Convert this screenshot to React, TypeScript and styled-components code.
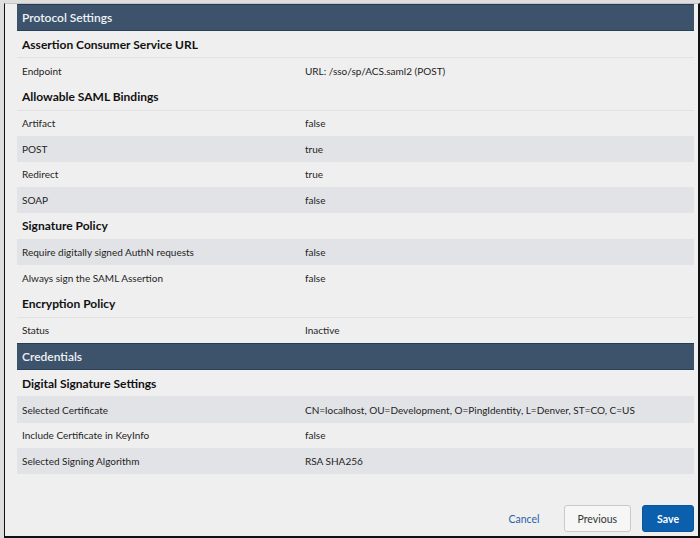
import React from "react";
import styled, { createGlobalStyle } from "styled-components";

const Global = createGlobalStyle`
  html, body { margin: 0; padding: 0; background: #dedede; }
  body { font-family: Lato, "Open Sans", "Liberation Sans", sans-serif; }
  * { box-sizing: border-box; }
`;

const Frame = styled.div`
  width: 696px;
  height: 535px;
  margin: 3px 0 0 4px;
  background: #efefef;
  border-top: 1px solid #c4c4c4;
  border-left: 1px solid #111;
  border-right: 2px solid #111;
  border-bottom: 2px solid #111;
  padding: 0 4px 0 12px;
  display: flex;
  flex-direction: column;
`;

const SectionHeader = styled.div`
  height: 27px;
  display: flex;
  align-items: center;
  padding-left: 5px;
  background: #3c536b;
  border-top: 1px solid #243c55;
  border-bottom: 1px solid #2a4259;
  color: #eef2f6;
  font-size: 12px;
  font-weight: 600;
`;

const SubHeading = styled.div`
  height: 27px;
  display: flex;
  align-items: center;
  padding-left: 5px;
  border-bottom: 1px solid #e2e2e2;
  color: #111;
  font-size: 12px;
  font-weight: 700;
`;

const Row = styled.div<{ $shaded?: boolean }>`
  height: 25.5px;
  display: grid;
  grid-template-columns: 283px 1fr;
  align-items: center;
  background: ${(p) => (p.$shaded ? "#e2e3e6" : "transparent")};
  color: #1e1e1e;
  font-size: 10px;
`;

const Cell = styled.div`
  padding-left: 5px;
  white-space: nowrap;
`;

const Footer = styled.div`
  margin-top: auto;
  margin-bottom: 4px;
  display: flex;
  justify-content: flex-end;
  align-items: center;
  gap: 11px;
`;

const LinkButton = styled.button`
  border: none;
  background: none;
  color: #1f63a8;
  font-family: inherit;
  font-size: 10.5px;
  padding: 0 13px 0 0;
  cursor: pointer;
`;

const Button = styled.button<{ $primary?: boolean }>`
  height: 27px;
  padding: 0 ${(p) => (p.$primary ? "14px" : "13px")};
  border-radius: 3px;
  font-family: inherit;
  font-size: 10.5px;
  font-weight: ${(p) => (p.$primary ? 700 : 400)};
  color: ${(p) => (p.$primary ? "#ffffff" : "#333")};
  background: ${(p) => (p.$primary ? "#0b5fad" : "#f6f6f6")};
  border: 1px solid ${(p) => (p.$primary ? "#0a569d" : "#c9c9c9")};
  cursor: pointer;
`;

type Item = { label: string; value: string };
type Group = { title: string; items: Item[]; shadeStart: number };
type Section = { title: string; groups: Group[] };

const sections: Section[] = [
  {
    title: "Protocol Settings",
    groups: [
      {
        title: "Assertion Consumer Service URL",
        shadeStart: 1,
        items: [{ label: "Endpoint", value: "URL: /sso/sp/ACS.saml2 (POST)" }],
      },
      {
        title: "Allowable SAML Bindings",
        shadeStart: 1,
        items: [
          { label: "Artifact", value: "false" },
          { label: "POST", value: "true" },
          { label: "Redirect", value: "true" },
          { label: "SOAP", value: "false" },
        ],
      },
      {
        title: "Signature Policy",
        shadeStart: 0,
        items: [
          { label: "Require digitally signed AuthN requests", value: "false" },
          { label: "Always sign the SAML Assertion", value: "false" },
        ],
      },
      {
        title: "Encryption Policy",
        shadeStart: 1,
        items: [{ label: "Status", value: "Inactive" }],
      },
    ],
  },
  {
    title: "Credentials",
    groups: [
      {
        title: "Digital Signature Settings",
        shadeStart: 0,
        items: [
          {
            label: "Selected Certificate",
            value: "CN=localhost, OU=Development, O=PingIdentity, L=Denver, ST=CO, C=US",
          },
          { label: "Include Certificate in KeyInfo", value: "false" },
          { label: "Selected Signing Algorithm", value: "RSA SHA256" },
        ],
      },
    ],
  },
];

export default function App() {
  return (
    <>
      <Global />
      <Frame>
        {sections.map((s) => (
          <React.Fragment key={s.title}>
            <SectionHeader>{s.title}</SectionHeader>
            {s.groups.map((g) => (
              <React.Fragment key={g.title}>
                <SubHeading>{g.title}</SubHeading>
                {g.items.map((it, i) => (
                  <Row key={it.label} $shaded={i % 2 === (g.shadeStart === 0 ? 0 : 1)}>
                    <Cell>{it.label}</Cell>
                    <Cell>{it.value}</Cell>
                  </Row>
                ))}
              </React.Fragment>
            ))}
          </React.Fragment>
        ))}
        <Footer>
          <LinkButton>Cancel</LinkButton>
          <Button>Previous</Button>
          <Button $primary>Save</Button>
        </Footer>
      </Frame>
    </>
  );
}
